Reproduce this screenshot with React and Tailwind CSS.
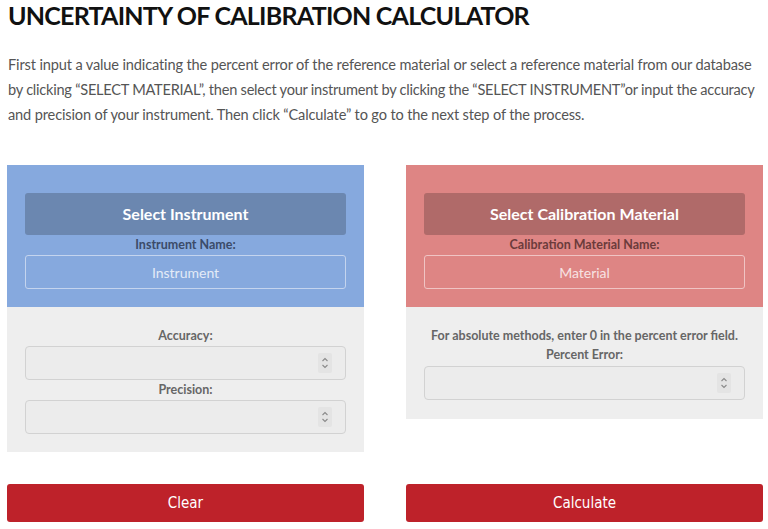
import React from "react";

const font = { fontFamily: "Lato, 'Noto Sans', sans-serif" };

function Spinner() {
  return (
    <div className="flex h-[20px] w-[14px] flex-col items-center justify-center bg-[#e4e4e4] rounded-[2px]">
      <svg width="8" height="14" viewBox="0 0 8 14" fill="none" stroke="#8a8a8a" strokeWidth="1.1">
        <path d="M1.5 5 L4 2.5 L6.5 5" />
        <path d="M1.5 9 L4 11.5 L6.5 9" />
      </svg>
    </div>
  );
}

function NumInput() {
  return (
    <div className="flex h-[34px] w-full items-center justify-end rounded-[4px] border border-[#d2d2d2] bg-[#ececec] pr-[13px]">
      <Spinner />
    </div>
  );
}

export default function App() {
  return (
    <div className="w-[768px] bg-white" style={font}>
      <h1 className="pl-[8px] pt-[1px] text-[25px] font-bold leading-[28px] text-[#111] tracking-[-0.75px]">
        UNCERTAINTY OF CALIBRATION CALCULATOR
      </h1>
      <p className="mt-[23px] pl-[8px] pr-[4px] text-[14.6px] leading-[25px] text-[#555] tracking-[-0.15px]">
        <span className="block whitespace-nowrap">First input a value indicating the percent error of the reference material or select a reference material from our database</span>
        <span className="block whitespace-nowrap tracking-[-0.25px]">by clicking “SELECT MATERIAL”, then select your instrument by clicking the “SELECT INSTRUMENT”or input the accuracy</span>
        <span className="block whitespace-nowrap">and precision of your instrument. Then click “Calculate” to go to the next step of the process.</span>
      </p>

      <div className="mt-[38px] flex items-start gap-[42px] pl-[7px]">
        {/* Left */}
        <div className="w-[357px] shrink-0">
          <div className="bg-[#86a9de] px-[18px] pt-[28px] pb-[18px]">
            <div className="flex h-[42px] items-center justify-center rounded-[3px] bg-[#6b87b0] text-[16px] font-bold text-white">
              Select Instrument
            </div>
            <div className="mt-[1px] text-center text-[12.5px] font-bold leading-[17px] text-[#3b4b69]">
              Instrument Name:
            </div>
            <div className="mt-[2px] flex h-[34px] items-center justify-center rounded-[3px] border border-[#c4d4ee] text-[14px] text-[#e3ebf7]">
              Instrument
            </div>
          </div>
          <div className="bg-[#eeeeee] px-[18px] pt-[20px] pb-[18px]">
            <div className="text-center text-[12.5px] font-bold leading-[18px] text-[#666]">Accuracy:</div>
            <div className="mt-[1px]"><NumInput /></div>
            <div className="mt-[1px] text-center text-[12.5px] font-bold leading-[18px] text-[#666]">Precision:</div>
            <div className="mt-[1px]"><NumInput /></div>
          </div>
        </div>

        {/* Right */}
        <div className="w-[357px] shrink-0">
          <div className="bg-[#de8584] px-[18px] pt-[28px] pb-[18px]">
            <div className="flex h-[42px] items-center justify-center rounded-[3px] bg-[#b06a69] text-[16px] font-bold text-white">
              Select Calibration Material
            </div>
            <div className="mt-[1px] text-center text-[12.5px] font-bold leading-[17px] text-[#6b3b3b]">
              Calibration Material Name:
            </div>
            <div className="mt-[2px] flex h-[34px] items-center justify-center rounded-[3px] border border-[#f0c4c4] text-[14px] text-[#f7e3e3]">
              Material
            </div>
          </div>
          <div className="bg-[#eeeeee] px-[18px] pt-[20px] pb-[19px]">
            <div className="text-center text-[12.5px] font-bold leading-[18px] text-[#666]">
              For absolute methods, enter 0 in the percent error field.
            </div>
            <div className="mt-[1px] text-center text-[12.5px] font-bold leading-[18px] text-[#666]">Percent Error:</div>
            <div className="mt-[2px]"><NumInput /></div>
          </div>
        </div>
      </div>

      <div className="mt-[32px] flex gap-[42px] pl-[7px]">
        <button
          className="flex h-[38px] w-[357px] shrink-0 items-center justify-center rounded-[3px] bg-[#be222a] text-[15px] text-white"
          style={{ fontFamily: "'DejaVu Sans Condensed', 'DejaVu Sans', sans-serif" }}
        >
          Clear
        </button>
        <button
          className="flex h-[38px] w-[357px] shrink-0 items-center justify-center rounded-[3px] bg-[#be222a] text-[15px] text-white"
          style={{ fontFamily: "'DejaVu Sans Condensed', 'DejaVu Sans', sans-serif" }}
        >
          Calculate
        </button>
      </div>
    </div>
  );
}
